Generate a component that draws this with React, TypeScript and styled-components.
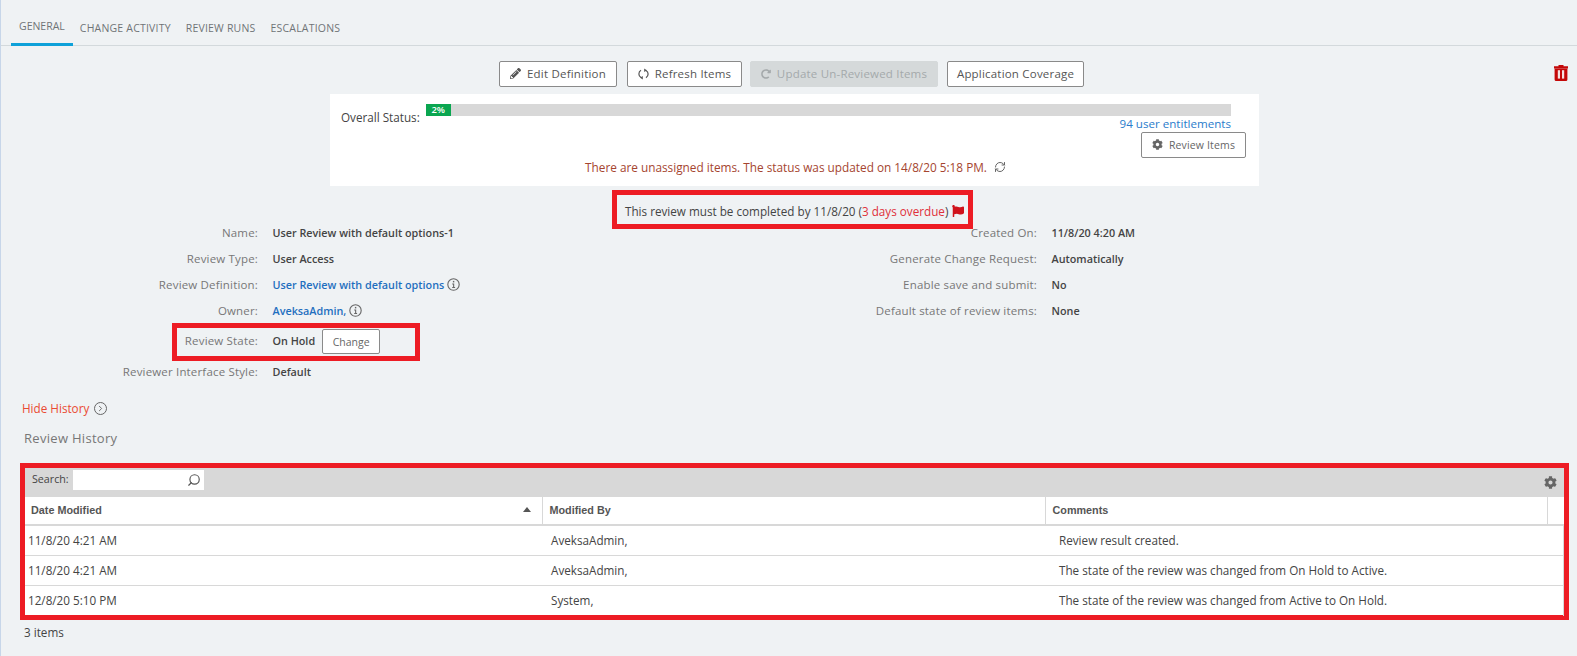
import React from "react";
import styled, { createGlobalStyle } from "styled-components";
import { FaCog, FaFlag, FaPencilAlt, FaRedoAlt } from "react-icons/fa";
import { ChevronRight, RefreshCw, Search } from "lucide-react";

const Global = createGlobalStyle`
  html, body { margin: 0; padding: 0; background: #eff2f4; }
  body { font-family: "Open Sans", "Liberation Sans", sans-serif; font-size: 11.7px; color: #444; }
`;

const Page = styled.div`
  width: 1577px;
  height: 656px;
  box-sizing: border-box;
  border-left: 1px solid #c7d6e9;
  overflow: hidden;
`;

const TabBar = styled.nav`
  height: 46px;
  box-sizing: border-box;
  border-bottom: 1px solid #d3d9dc;
  padding-left: 10px;
  display: flex;
  align-items: flex-end;
`;

const Tab = styled.a<{ $active?: boolean }>`
  height: ${(p) => (p.$active ? "28px" : "25px")};
  margin-bottom: ${(p) => (p.$active ? "-1px" : "0")};
  box-sizing: border-box;
  padding: 0 8px 0 ${(p) => (p.$active ? "8px" : "7px")};
  font-size: 10.5px;
  line-height: 16px;
  letter-spacing: ${(p) => (p.$active ? "0" : "0.2px")};
  color: #6f7477;
  text-transform: uppercase;
  border-bottom: ${(p) => (p.$active ? "3px solid #0ea1d9" : "none")};
`;

const Actions = styled.div`
  display: flex;
  align-items: center;
  height: 26px;
  margin-top: 15px;
  padding: 0 9px 0 498px;
`;

const Action = styled.button<{ $w: number; $gap: number; $disabled?: boolean }>`
  width: ${(p) => p.$w}px;
  height: 26px;
  margin-right: ${(p) => p.$gap}px;
  box-sizing: border-box;
  display: inline-flex;
  align-items: center;
  justify-content: center;
  gap: 6px;
  padding: 0 0 1px;
  font: 400 11.5px "Open Sans", sans-serif;
  letter-spacing: 0.2px;
  color: ${(p) => (p.$disabled ? "#a4a9ab" : "#555")};
  background: ${(p) => (p.$disabled ? "#d5d9da" : "#fff")};
  border: 1px solid ${(p) => (p.$disabled ? "#d5d9da" : "#8a8a8a")};
  border-radius: 2px;
`;

const TrashIcon = styled.svg`
  margin-left: auto;
  align-self: flex-start;
  width: 14px;
  height: 16px;
  margin-top: 4px;
`;

const StatusPanel = styled.section`
  width: 929px;
  height: 92px;
  margin: 7px 0 0 329px;
  background: #fff;
  box-sizing: border-box;
  padding: 10px 28px 0 11px;
`;

const StatusTop = styled.div`
  display: flex;
  gap: 6px;
`;

const StatusLabel = styled.span`
  font-size: 11.7px;
  line-height: 27px;
  color: #444;
  white-space: nowrap;
`;

const StatusRight = styled.div`
  flex: 1;
  display: flex;
  flex-direction: column;
  align-items: flex-end;
`;

const Bar = styled.div`
  width: 100%;
  height: 12px;
  background: #d8d8d8;
`;

const BarFill = styled.div`
  height: 12px;
  background: #0aa650;
  color: #fff;
  font-size: 9.5px;
  font-weight: 600;
  line-height: 11px;
  text-align: center;
`;

const EntitlementLink = styled.a`
  color: #2a7ccb;
  font-size: 11.6px;
  line-height: 14px;
  margin-top: 1px;
`;

const ReviewButton = styled.button`
  align-self: flex-end;
  width: 105px;
  height: 26px;
  margin: 1px -15px 0 0;
  box-sizing: border-box;
  display: inline-flex;
  align-items: center;
  justify-content: center;
  gap: 6px;
  padding: 0 0 1px;
  background: #fff;
  border: 1px solid #8a8a8a;
  border-radius: 2px;
  color: #666;
  font: 400 10.5px "Open Sans", sans-serif;
  letter-spacing: 0.15px;
`;

const StatusMessage = styled.div`
  display: flex;
  align-items: center;
  justify-content: center;
  gap: 7px;
  margin: 1px -17px 0 0;
  padding-left: 2px;
  font-size: 11.8px;
  line-height: 16px;
  color: #a5452f;
`;

const SyncGlyph = styled.span`
  display: inline-flex;
  color: #666;
`;

const DueBox = styled.div`
  width: 361px;
  height: 39px;
  margin: 4px 0 0 611px;
  box-sizing: border-box;
  border: 5px solid #ed1c24;
  display: flex;
  align-items: center;
  gap: 4px;
  padding: 3px 0 0 8px;
  font-size: 11.7px;
  color: #444;
  white-space: nowrap;
`;

const Overdue = styled.span`
  color: #e0303a;
`;

const Details = styled.div`
  display: flex;
  height: 168px;
  margin-top: -10px;
`;

const LeftColumn = styled.div`
  width: 780px;
  display: flex;
  flex-direction: column;
`;

const RightColumn = styled.div`
  display: flex;
  flex-direction: column;
`;

const Row = styled.div<{ $labelWidth: number; $h?: number }>`
  display: flex;
  align-items: center;
  height: ${(p) => p.$h ?? 26}px;
  white-space: nowrap;
  & > label {
    width: ${(p) => p.$labelWidth}px;
    margin-right: 14.5px;
    text-align: right;
    font-size: 11.5px;
    letter-spacing: 0.17px;
    color: #777;
  }
`;

const Value = styled.span`
  font-size: 10.8px;
  font-weight: 600;
  color: #444;
  display: inline-flex;
  align-items: center;
  gap: 3px;
`;

const ValueLink = styled(Value)`
  color: #1f6fbf;
`;

const StateBox = styled(Row)`
  width: 248px;
  margin-left: 171px;
  box-sizing: border-box;
  border: 5px solid #ed1c24;
  padding-bottom: 4px;
`;

const ChangeButton = styled.button`
  width: 58px;
  height: 25px;
  margin: 3px 0 0 7px;
  padding: 0;
  box-sizing: border-box;
  background: #fff;
  border: 1px solid #8a8a8a;
  border-radius: 2px;
  color: #666;
  font: 400 10.5px "Open Sans", sans-serif;
`;

const HistoryToggle = styled.div`
  display: flex;
  align-items: center;
  gap: 5px;
  height: 18px;
  margin: 12px 0 0 21px;
  font-size: 11.7px;
  color: #ea4a32;
`;

const CircleIcon = styled.span`
  width: 11px;
  height: 11px;
  border: 1.3px solid #666;
  border-radius: 50%;
  color: #666;
  display: inline-flex;
  align-items: center;
  justify-content: center;
`;

const HistoryTitle = styled.h2`
  margin: 12px 0 0 23px;
  font-size: 13px;
  font-weight: 400;
  line-height: 18px;
  letter-spacing: 0.3px;
  color: #777;
`;

const TableBox = styled.section`
  width: 1549px;
  height: 157px;
  margin: 16px 0 0 19px;
  box-sizing: border-box;
  border: 5px solid #ed1c24;
  background: #fff;
`;

const TableTools = styled.div`
  height: 29px;
  background: #d8d8d8;
  display: flex;
  align-items: flex-start;
  padding: 2px 7px 0 7px;
  box-sizing: border-box;
  gap: 4px;
  font-size: 10.7px;
  line-height: 18px;
  color: #444;
`;

const SearchBox = styled.div`
  width: 131px;
  height: 20px;
  background: #fff;
  display: flex;
  align-items: center;
  justify-content: flex-end;
  padding-right: 3px;
  box-sizing: border-box;
  color: #555;
`;

const GearSlot = styled.span`
  margin-left: auto;
  color: #666;
  display: inline-flex;
  margin-top: 6px;
`;

const cols = "518px 503px 502px 1fr";

const HeadRow = styled.div`
  display: grid;
  grid-template-columns: ${cols};
  height: 29px;
  box-sizing: border-box;
  border-bottom: 2px solid #d8d8d8;
`;

const HeadCell = styled.div`
  display: flex;
  align-items: center;
  justify-content: space-between;
  padding: 0 11px 2px 6px;
  border-right: 1px solid #d8d8d8;
  font: 700 10.8px "Liberation Sans", Arial, sans-serif;
  color: #555;
  & + & {
    padding-left: 6.5px;
  }
`;

const SortArrow = styled.span`
  width: 0;
  height: 0;
  border-left: 4px solid transparent;
  border-right: 4px solid transparent;
  border-bottom: 5px solid #555;
`;

const BodyRow = styled.div<{ $last?: boolean }>`
  display: grid;
  grid-template-columns: ${cols};
  height: 30px;
  box-sizing: border-box;
  padding-bottom: 2px;
  border-right: 1px solid #d8d8d8;
  border-bottom: ${(p) => (p.$last ? "none" : "1px solid #d8d8d8")};
  font-size: 11.7px;
  color: #444;
  align-items: center;
`;

const DateCell = styled.div`
  padding-left: 3px;
`;
const UserCell = styled.div`
  padding-left: 8px;
`;
const CommentCell = styled.div`
  padding-left: 13px;
`;

const ItemCount = styled.div`
  margin: 4px 0 0 23px;
  line-height: 16px;
  font-size: 11.7px;
  color: #444;
`;

const InfoIcon = () => (
  <svg width="13" height="13" viewBox="0 0 13 13" fill="none">
    <circle cx="6.5" cy="6.5" r="5.7" stroke="#666" strokeWidth="1.1" />
    <rect x="5.9" y="2.9" width="1.4" height="1.5" fill="#666" />
    <path d="M5.2 5.5h2v3.5h.9v.9H5.2V9h.9V6.4h-.9z" fill="#666" />
  </svg>
);

const ArcsIcon = () => (
  <svg width="11" height="12" viewBox="0 0 11 12" fill="none" stroke="#555" strokeWidth="1.2">
    <path d="M3 2.2A4.3 4.3 0 0 0 3 9.6" />
    <path d="M8 9.8A4.3 4.3 0 0 0 8 2.4" />
    <path d="M6.2 0.4v3.6L8.9 2.2z" fill="#555" stroke="none" />
    <path d="M4.8 8v3.6L2.1 9.8z" fill="#555" stroke="none" />
  </svg>
);

const rows = [
  ["11/8/20 4:21 AM", "AveksaAdmin,", "Review result created."],
  ["11/8/20 4:21 AM", "AveksaAdmin,", "The state of the review was changed from On Hold to Active."],
  ["12/8/20 5:10 PM", "System,", "The state of the review was changed from Active to On Hold."],
];

export default function App() {
  return (
    <Page>
      <Global />
      <TabBar>
        <Tab $active>General</Tab>
        <Tab>Change Activity</Tab>
        <Tab>Review Runs</Tab>
        <Tab>Escalations</Tab>
      </TabBar>
      <Actions>
        <Action $w={118} $gap={10}><FaPencilAlt size={11} />Edit Definition</Action>
        <Action $w={115} $gap={8}><ArcsIcon />Refresh Items</Action>
        <Action $w={188} $gap={9} $disabled><FaRedoAlt size={10} />Update Un-Reviewed Items</Action>
        <Action $w={137} $gap={0}>Application Coverage</Action>
        <TrashIcon viewBox="0 0 14 16">
          <path d="M4.5 0h5v1.2H14V3.6H0V1.2h4.5z" fill="#c40808" />
          <path d="M0.6 3.6h12.8v10.9a1.5 1.5 0 0 1-1.5 1.5H2.1A1.5 1.5 0 0 1 0.6 14.5z" fill="#c40808" />
          <rect x="3.8" y="5.2" width="2.2" height="8.4" fill="#f5e0e0" />
          <rect x="8" y="5.2" width="2.2" height="8.4" fill="#f5e0e0" />
        </TrashIcon>
      </Actions>
      <StatusPanel>
        <StatusTop>
          <StatusLabel>Overall Status:</StatusLabel>
          <StatusRight>
            <Bar><BarFill style={{ width: `${(25 / 805) * 100}%` }}>2%</BarFill></Bar>
            <EntitlementLink>94 user entitlements</EntitlementLink>
            <ReviewButton><FaCog size={11} />Review Items</ReviewButton>
          </StatusRight>
        </StatusTop>
        <StatusMessage>
          There are unassigned items. The status was updated on 14/8/20 5:18 PM.
          <SyncGlyph><RefreshCw size={12} /></SyncGlyph>
        </StatusMessage>
      </StatusPanel>
      <DueBox>
        <span>This review must be completed by 11/8/20 (<Overdue>3 days overdue</Overdue>)</span>
        <FaFlag size={12} color="#d0121b" />
      </DueBox>
      <Details>
        <LeftColumn>
          <Row $labelWidth={257}><label>Name:</label><Value>User Review with default options-1</Value></Row>
          <Row $labelWidth={257}><label>Review Type:</label><Value>User Access</Value></Row>
          <Row $labelWidth={257}><label>Review Definition:</label><ValueLink>User Review with default options<InfoIcon /></ValueLink></Row>
          <Row $labelWidth={257}><label>Owner:</label><ValueLink>AveksaAdmin,<InfoIcon /></ValueLink></Row>
          <StateBox $labelWidth={81} $h={38}>
            <label>Review State:</label>
            <Value>On Hold</Value>
            <ChangeButton>Change</ChangeButton>
          </StateBox>
          <Row $labelWidth={257} $h={20}><label>Reviewer Interface Style:</label><Value>Default</Value></Row>
        </LeftColumn>
        <RightColumn>
          <Row $labelWidth={256}><label>Created On:</label><Value>11/8/20 4:20 AM</Value></Row>
          <Row $labelWidth={256}><label>Generate Change Request:</label><Value>Automatically</Value></Row>
          <Row $labelWidth={256}><label>Enable save and submit:</label><Value>No</Value></Row>
          <Row $labelWidth={256}><label>Default state of review items:</label><Value>None</Value></Row>
        </RightColumn>
      </Details>
      <HistoryToggle>
        Hide History
        <CircleIcon><ChevronRight size={9} strokeWidth={2.5} /></CircleIcon>
      </HistoryToggle>
      <HistoryTitle>Review History</HistoryTitle>
      <TableBox>
        <TableTools>
          Search:
          <SearchBox><Search size={14} style={{ transform: "scaleX(-1)" }} /></SearchBox>
          <GearSlot><FaCog size={13} /></GearSlot>
        </TableTools>
        <HeadRow>
          <HeadCell>Date Modified<SortArrow /></HeadCell>
          <HeadCell>Modified By</HeadCell>
          <HeadCell>Comments</HeadCell>
          <span />
        </HeadRow>
        {rows.map((r, i) => (
          <BodyRow key={i} $last={i === rows.length - 1}>
            <DateCell>{r[0]}</DateCell>
            <UserCell>{r[1]}</UserCell>
            <CommentCell>{r[2]}</CommentCell>
          </BodyRow>
        ))}
      </TableBox>
      <ItemCount>3 items</ItemCount>
    </Page>
  );
}
